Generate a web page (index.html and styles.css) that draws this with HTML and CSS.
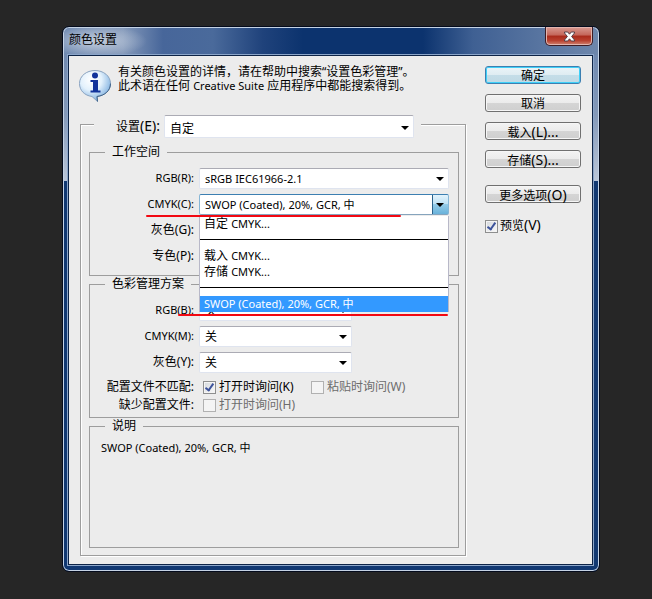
FILE: index.html
```html
<!DOCTYPE html>
<html lang="zh-CN">
<head>
<meta charset="utf-8">
<title>颜色设置</title>
<link rel="stylesheet" href="styles.css">
</head>
<body>
<main class="window">
  <header class="titlebar">
    <h1 class="title">颜色设置</h1>
    <button class="close" type="button" aria-label="关闭">
      <svg width="13" height="11" viewBox="0 0 13 11"><path d="M1.500 1h3.200l1.800 2.200L8.300 1h3.200v1L8.600 5.500l2.900 3.500v1H8.300L6.500 7.800 4.700 10H1.500V9l2.900-3.500L1.500 2z" fill="#fff" stroke="#53404a" stroke-width="1"/></svg>
    </button>
  </header>
  <form class="client">
    <div class="content">
      <div class="info">
        <svg class="info-icon" width="32" height="37" viewBox="0 0 32 37">
          <defs>
            <radialGradient id="bubble" cx=".38" cy=".3" r=".75">
              <stop offset="0" stop-color="#fff"/><stop offset=".45" stop-color="#e3f1fc"/><stop offset="1" stop-color="#6fa6dc"/>
            </radialGradient>
          </defs>
          <path d="M16 5.500C7.500 5.500.500 11 .500 18.500c0 7 5 12 12.500 13l5.500 5-.5-5c8-1 13.500-6 13.500-13C31.500 11 24.500 5.500 16 5.500z" fill="url(#bubble)" stroke="#8aa3c0"/>
          <path d="M18.500 36.500l-.5-5c8-1 13.500-6 13.500-13" fill="none" stroke="#3f6389"/>
          <circle cx="16" cy="10.500" r="3" fill="#10329b"/>
          <path d="M11.500 15h7.500v10.500h2.500v2h-10v-2H14V17h-2.500z" fill="#10329b"/>
        </svg>
        <p class="info-text">有关颜色设置的详情，请在帮助中搜索“设置色彩管理”。<br>此术语在任何 <span class="latin">Creative Suite</span> 应用程序中都能搜索得到。</p>
      </div>
      <fieldset class="group settings">
        <legend class="settings-legend">
          <label for="preset">设置<span class="key">(E):</span></label>
          <span class="combo preset"><select id="preset"><option>自定</option></select></span>
        </legend>
        <fieldset class="group spaces">
          <legend>工作空间</legend>
          <div class="row"><label for="rgb"><span class="latin">RGB(R):</span></label><span class="combo"><select id="rgb" class="latin"><option>sRGB IEC61966-2.1</option></select></span></div>
          <div class="row"><label for="cmyk"><span class="latin">CMYK(C):</span></label>
            <div class="combo open">
              <select id="cmyk" class="latin"><option>SWOP (Coated), 20%, GCR, 中</option></select>
              <ul class="menu" role="listbox" aria-label="CMYK">
                <li role="option">自定 <span class="latin">CMYK...</span></li>
                <li class="separator" role="presentation"></li>
                <li role="option">载入 <span class="latin">CMYK...</span></li>
                <li role="option">存储 <span class="latin">CMYK...</span></li>
                <li class="separator" role="presentation"></li>
                <li class="selected latin" role="option" aria-selected="true">SWOP (Coated), 20%, GCR, 中</li>
              </ul>
              <span class="mark mark-field"></span>
              <span class="mark mark-option"></span>
            </div>
          </div>
          <div class="row"><label for="gray">灰色(G):</label><span class="combo"><select id="gray"><option></option></select></span></div>
          <div class="row"><label for="spot">专色(P):</label><span class="combo"><select id="spot"><option></option></select></span></div>
        </fieldset>
        <fieldset class="group policies">
          <legend>色彩管理方案</legend>
          <div class="row"><label for="rgb-policy"><span class="latin">RGB(B):</span></label><span class="combo short"><select id="rgb-policy"><option>关</option></select></span></div>
          <div class="row"><label for="cmyk-policy"><span class="latin">CMYK(M):</span></label><span class="combo short"><select id="cmyk-policy"><option>关</option></select></span></div>
          <div class="row"><label for="gray-policy">灰色(Y):</label><span class="combo short"><select id="gray-policy"><option>关</option></select></span></div>
          <div class="checks">
            <span class="check-title">配置文件不匹配:</span>
            <label class="check"><input type="checkbox" checked>打开时询问(K)</label>
            <label class="check"><input type="checkbox" disabled>粘贴时询问(W)</label>
            <span class="check-title">缺少配置文件:</span>
            <label class="check"><input type="checkbox" disabled>打开时询问(H)</label>
          </div>
        </fieldset>
        <fieldset class="group description">
          <legend>说明</legend>
          <p class="latin">SWOP (Coated), 20%, GCR, 中</p>
        </fieldset>
      </fieldset>
    </div>
    <aside class="actions">
      <button class="button default" type="button">确定</button>
      <button class="button" type="button">取消</button>
      <button class="button" type="button">载入<span class="key">(L)...</span></button>
      <button class="button" type="button">存储<span class="key">(S)...</span></button>
      <button class="button more" type="button">更多选项<span class="key">(O)</span></button>
      <label class="check preview"><input type="checkbox" checked><span>预览<span class="key">(V)</span></span></label>
    </aside>
  </form>
</main>
</body>
</html>
```
FILE: styles.css
```css
* { box-sizing: border-box; }

body {
  margin: 0;
  padding: 26px 52px 28px 62px;
  background: #262626;
  color: #000;
  font: 12px/16px "Noto Sans", "Noto Sans CJK SC", sans-serif;
}

h1, p, ul { margin: 0; padding: 0; }

button, select, input { font: inherit; color: inherit; margin: 0; }

.latin, .combo .latin { font-size: 11px; }

.key { font-size: 14px; line-height: 1; }

.window {
  padding: 0 6px 6px 5px;
  border: 1px solid #040b1c;
  border-radius: 7px;
  background:
    radial-gradient(ellipse 50px 16px at 34px 14px, #c3cede, transparent) top left / 100% 28px no-repeat,
    linear-gradient(90deg, #6f89b0 0, #8499ba 60px, #47669a 100px, #4a6a9b 150px, #1f427b 200px, #0c336e 240px, #0c336e 360px, #3f6093 410px, #6e87ac 100%) top / 100% 28px no-repeat,
    linear-gradient(#7089b0, #8499b9 60px, #b9c5d8 125px) 0 28px / 100% 126px no-repeat,
    #113872;
  box-shadow: inset 0 0 0 1px #c4d2e4;
}

.titlebar {
  display: flex;
  justify-content: space-between;
  align-items: flex-start;
  height: 28px;
}

.title {
  padding: 5px 1px;
  font-size: 12px;
  font-weight: 400;
}

.close {
  display: grid;
  place-items: center;
  width: 48px;
  height: 19px;
  padding: 0;
  border: 1px solid #3d1c24;
  border-top: 0;
  border-radius: 0 0 5px 5px;
  background: linear-gradient(#d99a91, #c4665a 45%, #a92a1b 50%, #b9402f 75%, #d08472);
  box-shadow: inset 0 0 0 1px #e3b5ae;
}

.client {
  display: flex;
  gap: 19px;
  padding: 9px 11px 8px 10px;
  border: 1px solid #0d2346;
  background: #ececec;
  box-shadow: 0 0 0 1px #8ba5c9;
}

.content { flex: 1; min-width: 0; }

.info { display: flex; gap: 7px; height: 45px; }

.info-text { line-height: 14px; white-space: nowrap; }

.group {
  min-width: 0;
  margin: 0;
  padding: 0;
  border: 1px solid #9d9d9d;
}

.group legend { margin-left: 15px; padding: 0 7px; }

.settings {
  margin-left: 1px;
  padding: 6px 6px 7px 8px;
  box-shadow: 1px 1px 0 #fff, inset 1px 1px 0 #fff;
}

.group .settings-legend {
  display: flex;
  gap: 4px;
  height: 28px;
  margin-left: 5px;
  padding: 5px 7px 0 22px;
  background: #ececec;
  line-height: 24px;
}

.spaces { padding: 5px 9px 6px 0; }

.policies { padding: 3px 9px 3px 0; }

.policies .row:first-of-type { margin-top: 2px; }

.row {
  display: grid;
  grid-template-columns: 104px 1fr;
  column-gap: 5px;
  align-items: center;
  height: 26px;
}

.row > label { text-align: right; }

.combo { position: relative; display: block; height: 21px; }

.combo.preset { width: 250px; height: 23px; }

.combo.short { width: 153px; }

.combo select {
  display: block;
  appearance: none;
  width: 100%;
  height: 100%;
  padding: 1px 20px 0 5px;
  border: 1px solid #dfe4ef;
  border-top-color: #ababb4;
  border-radius: 2px;
  background: #fff;
}

.combo::after {
  content: "";
  position: absolute;
  top: 9px;
  right: 5px;
  border: 4px solid transparent;
  border-top-color: #000;
  border-bottom: 0;
  pointer-events: none;
}

.combo.preset::after { top: 11px; }

.combo.open select {
  border-color: #3c7fb1 #86b6d6 #86a4bd;
  background: linear-gradient(#e3f3fc 0, #bfe2f5 45%, #93cbe8 50%, #69b2da) right / 15px 100% no-repeat, linear-gradient(#2c628b, #2c628b) right / 16px 100% no-repeat, #fff;
}

.menu {
  position: absolute;
  z-index: 1;
  top: 22px;
  left: 0;
  right: 0;
  border: 1px solid #b8b8c8;
  border-top: 0;
  border-bottom: 0;
  background: #fff;
  list-style: none;
}

.menu li { height: 16px; padding: 0 4px; white-space: nowrap; }

.menu .separator {
  padding: 0;
  background: linear-gradient(#000, #000) center / 100% 1px no-repeat;
}

.menu .selected { background: #3399ff; color: #fff; }

.mark { position: absolute; z-index: 2; height: 2px; border-radius: 1px; background: #f20812; }

.mark-field { top: 21px; left: -53px; right: 48px; }

.mark-option { top: 120px; left: -21px; right: 1px; }

.checks {
  display: grid;
  grid-template-columns: 104px 108px 1fr;
  grid-auto-rows: 18px;
  align-items: center;
  padding-top: 3px;
}

.check-title { text-align: right; white-space: nowrap; }

.check { display: flex; align-items: center; gap: 3px; white-space: nowrap; }

.checks .check { padding-left: 9px; }

.check:has(:disabled) { color: #6d6d6d; }

.check input {
  appearance: none;
  flex: none;
  width: 13px;
  height: 13px;
  border: 1px solid #8e8f8f;
  background: linear-gradient(135deg, #d3d7dc, #fafafa);
  box-shadow: inset 0 0 0 1px #f4f4f4;
}

.check input:disabled { border-color: #b1b1b1; background: #f4f4f4; }

.check input:checked {
  display: flex;
  justify-content: center;
  align-items: flex-start;
}

.check input:checked::before {
  content: "";
  box-sizing: border-box;
  width: 5px;
  height: 9px;
  border: solid #3d539b;
  border-width: 0 2px 2px 0;
  transform: rotate(35deg);
}

.description { min-height: 130px; }

.description p { padding: 6px 11px; }

.actions {
  display: flex;
  flex-direction: column;
  gap: 10px;
  width: 96px;
  padding-top: 1px;
}

.button {
  height: 18px;
  padding: 2px 0 0;
  border: 1px solid #707070;
  border-radius: 3px;
  background: linear-gradient(#f3f3f3, #ebebeb 50%, #d5d5d5 50%, #cfcfcf);
  box-shadow: inset 0 0 0 1px #f6f6f6;
  line-height: 14px;
}

.button.default {
  border-color: #3c7fb1;
  background: linear-gradient(#eaf4f8, #dfecf2 50%, #c4dde8 50%, #c0dae5);
  box-shadow: inset 0 0 0 1px #3fd0f8;
}

.button.more { margin-top: 7px; }

.preview { margin-top: 5px; gap: 2px; }
```
